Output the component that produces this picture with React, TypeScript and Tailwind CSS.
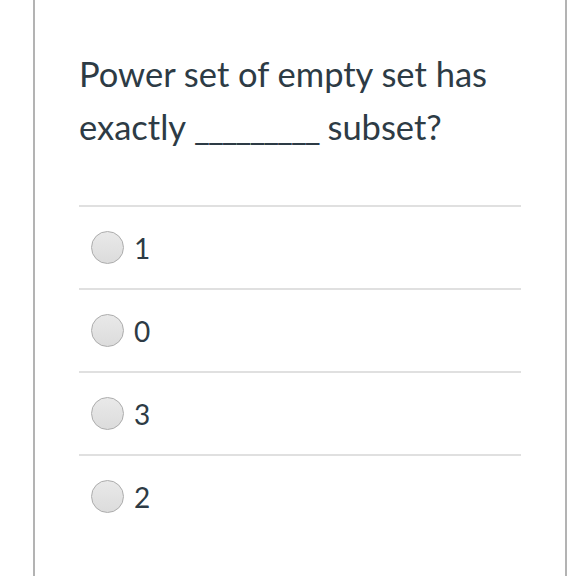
import React from 'react'

const options = ['1', '0', '3', '2']

export default function App() {
  return (
    <div className="w-[576px] h-[576px] bg-white overflow-hidden font-['Lato','Liberation_Sans',sans-serif] text-[#2d3b45]">
      <div className="ml-[33px] w-[534px] h-[576px] border-x-2 border-[#b3b3b3] px-[44px] pt-[47px]">
        <p className="text-[34.5px] leading-[53px] mb-[52px]">
          Power set of empty set has exactly <span className="tracking-[-2px]">_________</span> subset?
        </p>
        <div>
          {options.map((opt) => (
            <label key={opt} className="flex items-center h-[83px] border-t-2 border-[#e0e0e0] pl-[12px]">
              <span className="w-[33px] h-[33px] rounded-full border border-[#acacac] bg-gradient-to-b from-[#e9e9e9] to-[#dcdcdc]" />
              <span className="ml-[10px] text-[28px] leading-none">{opt}</span>
            </label>
          ))}
        </div>
      </div>
    </div>
  )
}
